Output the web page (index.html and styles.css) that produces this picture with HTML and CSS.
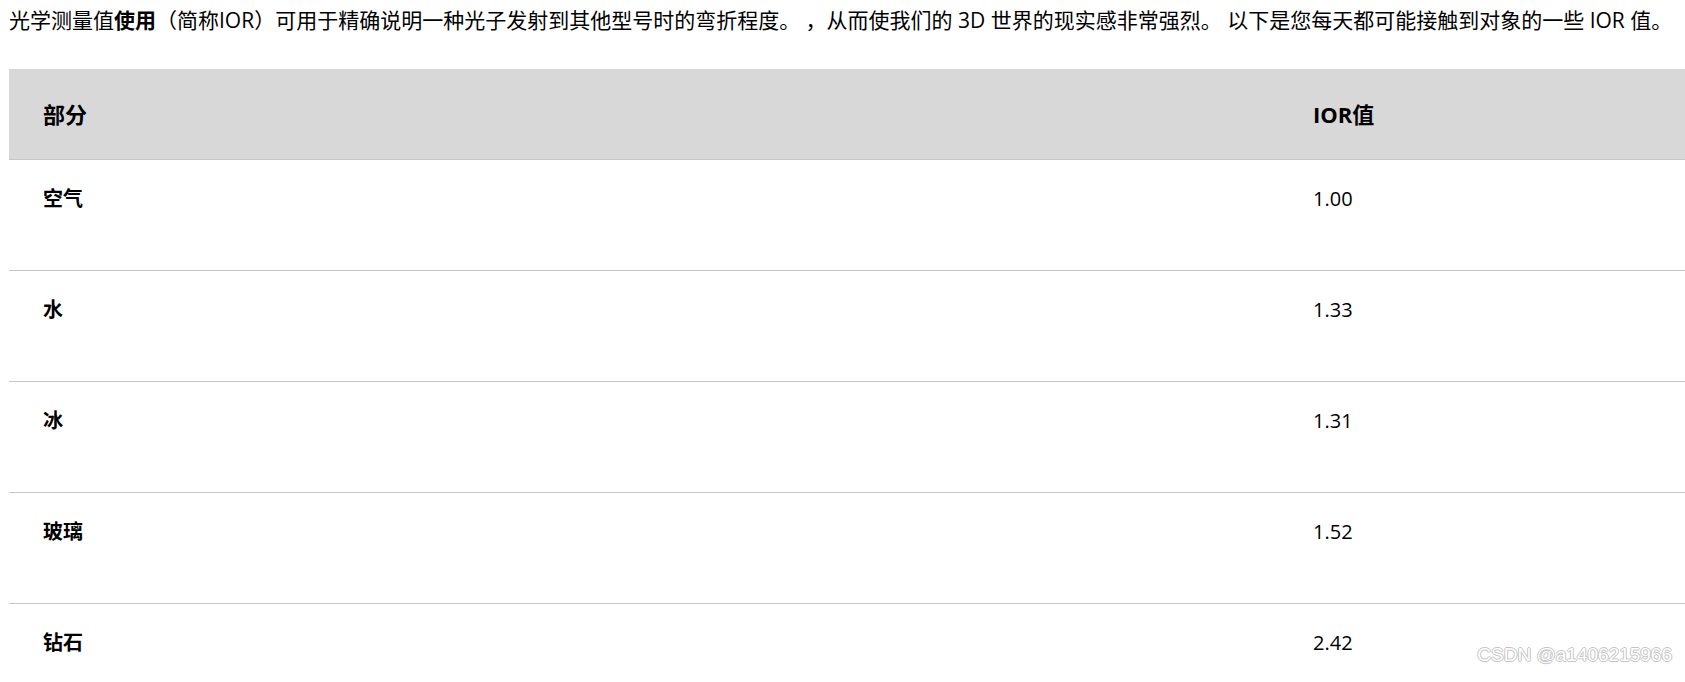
FILE: index.html
```html
<!DOCTYPE html>
<html lang="zh-CN">
<head>
<meta charset="utf-8">
<title>IOR</title>
<link rel="stylesheet" href="styles.css">
</head>
<body>
<div class="page">
  <p class="intro">光学测量值<strong>使用</strong>（简称IOR）可用于精确说明一种光子发射到其他型号时的弯折程度。 ，从而使我们的 3D 世界的现实感非常强烈。 以下是您每天都可能接触到对象的一些 IOR 值。</p>
  <table class="ior">
    <thead>
      <tr><th class="c1">部分</th><th class="c2">IOR值</th></tr>
    </thead>
    <tbody>
      <tr><td class="c1 name">空气</td><td class="c2">1.00</td></tr>
      <tr><td class="c1 name">水</td><td class="c2">1.33</td></tr>
      <tr><td class="c1 name">冰</td><td class="c2">1.31</td></tr>
      <tr><td class="c1 name">玻璃</td><td class="c2">1.52</td></tr>
      <tr><td class="c1 name">钻石</td><td class="c2">2.42</td></tr>
    </tbody>
  </table>
</div>
<div class="watermark">CSDN @a1406215966</div>
</body>
</html>
```
FILE: styles.css
```css
html, body {
  margin: 0;
  padding: 0;
  background: #fff;
  overflow: hidden;
}
body {
  font-family: "Open Sans", "Noto Sans CJK SC", sans-serif;
  color: #000;
  text-spacing-trim: space-all;
}
.page {
  padding: 5px 0 0 9px;
}
.intro {
  margin: 0;
  font-size: 21px;
  line-height: 31px;
  white-space: nowrap;
  text-spacing-trim: space-all;
}
.intro strong {
  font-weight: 700;
}
.ior {
  margin-top: 33px;
  width: 1676px;
  border-collapse: collapse;
  table-layout: fixed;
}
.ior .c1 {
  width: 1270px;
}
.ior th {
  background: #d8d8d8;
  font-size: 22px;
  font-weight: 700;
  text-align: left;
  height: 90px;
  padding: 0 0 0 34px;
  line-height: 30px;
  border-bottom: 1px solid #c6c6c6;
  box-sizing: border-box;
}
.ior td {
  font-size: 20px;
  line-height: 30px;
  padding: 24px 0 56px 34px;
  vertical-align: top;
  border-bottom: 1px solid #c6c6c6;
}
.ior td.name {
  font-weight: 700;
}
.watermark {
  position: absolute;
  right: 13px;
  bottom: 17px;
  font-family: "Liberation Sans", Arial, sans-serif;
  font-size: 19px;
  line-height: 20px;
  color: #fff;
  text-shadow: 1px 0 0 #c4c4c4, -1px 0 0 #c4c4c4, 0 1px 0 #c4c4c4, 0 -1px 0 #c4c4c4;
}
```
